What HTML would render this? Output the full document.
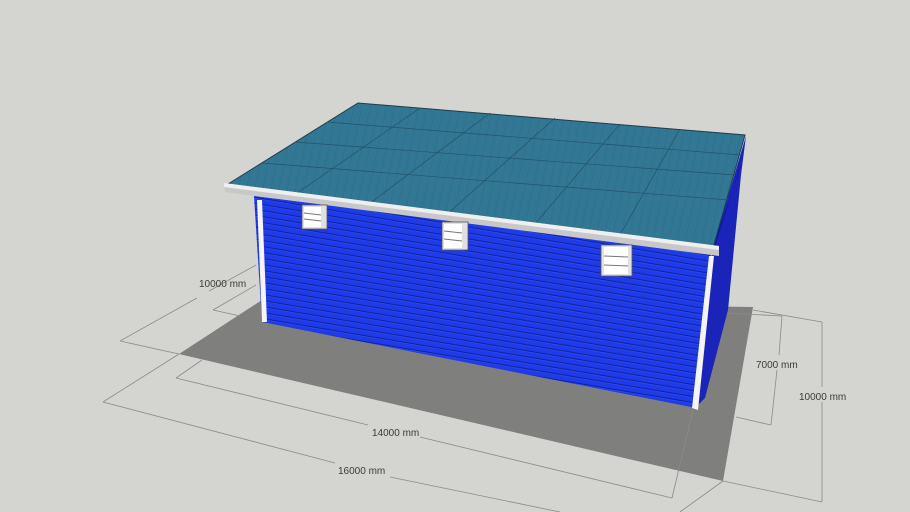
<!DOCTYPE html>
<html><head><style>
html,body{margin:0;padding:0;background:#d4d4d0;width:910px;height:512px;overflow:hidden}
svg{display:block}
text{font-family:"Liberation Sans",sans-serif;font-size:10px;fill:#3a3a3a}
</style></head><body>
<svg width="910" height="512" viewBox="0 0 910 512" xmlns="http://www.w3.org/2000/svg">
<defs>
<pattern id="sid" width="40" height="6" patternUnits="userSpaceOnUse" patternTransform="skewY(9.5)">
<rect width="40" height="6" fill="#1f3be8"/>
<rect y="4.2" width="40" height="0.9" fill="#0c1a8c"/>
<rect y="5.1" width="40" height="0.9" fill="#2a48f0"/>
</pattern>
<pattern id="rf" width="8" height="8" patternUnits="userSpaceOnUse" patternTransform="rotate(12)">
<rect width="8" height="8" fill="#327794"/>
<rect width="0.6" height="8" fill="#2d6d8a"/>
</pattern>
</defs>
<polygon points="179,354 262,300 753,307 723,481" fill="#7f807e"/>
<g stroke="#8a8a8a" stroke-width="0.8" fill="none">
<line x1="120" y1="341" x2="179" y2="354"/>
<line x1="120" y1="341" x2="197" y2="298"/>
<line x1="209" y1="291" x2="256" y2="265"/>
<line x1="213" y1="310" x2="256" y2="285"/>
<line x1="213" y1="310" x2="240" y2="316"/>
<line x1="103" y1="402" x2="179" y2="354"/>
<line x1="103" y1="402" x2="335" y2="463"/>
<line x1="390" y1="477" x2="560" y2="512"/>
<line x1="176" y1="378" x2="202" y2="360"/>
<line x1="176" y1="378" x2="368" y2="425"/>
<line x1="420" y1="437" x2="672" y2="498"/>
<line x1="672" y1="498" x2="693" y2="410"/>
<line x1="680" y1="512" x2="723" y2="481"/>
<line x1="753" y1="310" x2="822" y2="322"/>
<line x1="723" y1="481" x2="822" y2="502"/>
<line x1="822" y1="322" x2="822" y2="387"/>
<line x1="822" y1="402" x2="822" y2="502"/>
<line x1="736" y1="417" x2="771" y2="425"/>
<line x1="782" y1="316" x2="779" y2="355"/>
<line x1="777" y1="370" x2="771" y2="425"/>
<line x1="725" y1="313" x2="782" y2="316"/>
</g>
<text x="199" y="287">10000 mm</text>
<text x="372" y="436">14000 mm</text>
<text x="338" y="474">16000 mm</text>
<text x="756" y="368">7000 mm</text>
<text x="799" y="400">10000 mm</text>
<polygon points="712,250 746,136 741,175 728,310 705,398 697,406" fill="#1a24b8"/>
<polygon points="714,250 742,160 738,175 708,260" fill="#0d16a0"/>
<polygon points="254,196 711,252 696,408 262,322" fill="url(#sid)"/>
<polygon points="257,200 262,200 267,322 262,322" fill="#f4f4f4"/>
<polygon points="709,256 714,256 698,410 692,408" fill="#f4f4f4"/>
<polygon points="228,184 358,103 745,135 713,248" fill="url(#rf)" stroke="#1f3c4c" stroke-width="1"/>
<g stroke="#23536a" stroke-width="0.7" fill="none">
<line x1="327" y1="122" x2="741" y2="155"/>
<line x1="295" y1="142" x2="735" y2="175"/>
<line x1="262" y1="163" x2="729" y2="200"/>
<line x1="420" y1="108" x2="290" y2="198"/>
<line x1="490" y1="113" x2="365" y2="207"/>
<line x1="555" y1="118" x2="445" y2="216"/>
<line x1="620" y1="124" x2="535" y2="224"/>
<line x1="680" y1="129" x2="620" y2="235"/>
</g>
<polygon points="224,183 719,246 719,256 225,192" fill="#c8c8c8"/>
<polygon points="224,183 719,246 719,250 224,187" fill="#efefef"/>
<g>
<rect x="302" y="205" width="25" height="24" fill="#e0e0e0" stroke="#555" stroke-width="0.8"/>
<rect x="304" y="207" width="17" height="20" fill="#fff"/>
<line x1="304" y1="213" x2="321" y2="215" stroke="#777"/>
<line x1="304" y1="219" x2="321" y2="221" stroke="#777"/>
<rect x="442" y="222" width="26" height="28" fill="#e0e0e0" stroke="#555" stroke-width="0.8"/>
<rect x="444" y="224" width="18" height="24" fill="#fff"/>
<line x1="444" y1="231" x2="462" y2="233" stroke="#777"/>
<line x1="444" y1="239" x2="462" y2="241" stroke="#777"/>
<rect x="601" y="245" width="31" height="31" fill="#e0e0e0" stroke="#555" stroke-width="0.8"/>
<rect x="604" y="247" width="24" height="27" fill="#fff"/>
<line x1="604" y1="256" x2="628" y2="257" stroke="#777"/>
<line x1="604" y1="265" x2="628" y2="266" stroke="#777"/>
</g>
</svg>
</body></html>
